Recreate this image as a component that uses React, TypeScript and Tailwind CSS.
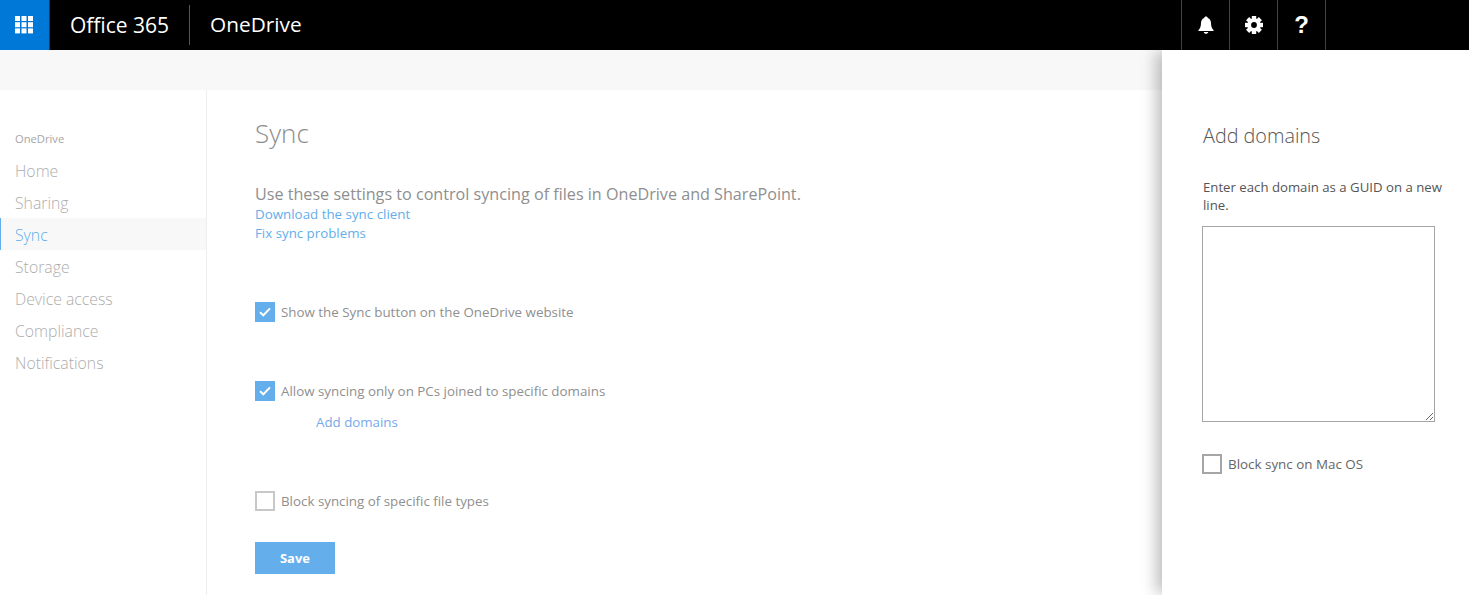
import React from "react";

function Waffle() {
  return (
    <svg width="18" height="18" viewBox="0 0 18 18" fill="#fff">
      {[0, 6.2, 12.4].map((y) =>
        [0, 6.5, 13].map((x) => <rect key={`${x}-${y}`} x={x} y={y} width="5" height="5" />)
      )}
    </svg>
  );
}

function Bell() {
  return (
    <svg width="16" height="18" viewBox="0 0 16 18" fill="#fff">
      <path d="M8 0.5c1 0 1.600.6 1.800 1.400C12 2.700 13 4.600 13 7c0 3 .7 5.200 2.600 7.200v.8H.4v-.8C2.300 12.200 3 10 3 7c0-2.400 1-4.300 3.200-5.100C6.400 1.100 7 .5 8 .5z" />
      <path d="M5.600 16h4.800C10 17.200 9.100 17.800 8 17.800S6 17.200 5.600 16z" />
    </svg>
  );
}

function Gear() {
  return (
    <svg width="18" height="18" viewBox="0 0 18 18">
      <circle cx="9" cy="9" r="4.800" fill="none" stroke="#fff" strokeWidth="3.800" />
      {[0, 45, 90, 135, 180, 225, 270, 315].map((a) => (
        <rect key={a} x="6.800" y="0" width="4.400" height="4" fill="#fff" transform={`rotate(${a} 9 9)`} />
      ))}
    </svg>
  );
}

function Check() {
  return (
    <svg width="12" height="10" viewBox="0 0 12 10" fill="none" stroke="#fff" strokeWidth="2">
      <path d="M1 5.200 4.300 8.300 11 1.400" />
    </svg>
  );
}

function Box({ checked, dark }: { checked?: boolean; dark?: boolean }) {
  if (checked) {
    return (
      <span className="flex h-5 w-5 shrink-0 items-center justify-center bg-[#63aeeb]">
        <Check />
      </span>
    );
  }
  return <span className={`block h-5 w-5 shrink-0 border-2 bg-white ${dark ? "border-[#a6a6a6]" : "border-[#c8c8c8]"}`} />;
}

function Option({ checked, label }: { checked?: boolean; label: string }) {
  return (
    <div className="flex h-5 items-center gap-[6px]">
      <Box checked={checked} />
      <span className="text-[13.35px] leading-5 text-[#8f8f8f]">{label}</span>
    </div>
  );
}

const NAV = ["Home", "Sharing", "Sync", "Storage", "Device access", "Compliance", "Notifications"];

export default function App() {
  return (
    <div className="relative h-[595px] w-full overflow-hidden bg-white font-['Open_Sans','Liberation_Sans',sans-serif]">
      <header className="flex h-[50px] items-center bg-black text-white">
        <div className="flex h-[50px] w-[50px] items-center justify-center border-r border-[#333] bg-[#0078d7] pr-px">
          <Waffle />
        </div>
        <div className="ml-5 text-[21px] leading-[50px]">Office 365</div>
        <div className="ml-5 h-10 w-px bg-[#555]" />
        <div className="ml-5 h-[50px] text-[20.8px] leading-[49px]">OneDrive</div>
        <div className="ml-auto mr-[143px] flex h-full border-l border-[#444]">
          <div className="flex h-full w-12 items-center justify-center border-r border-[#444]"><Bell /></div>
          <div className="flex h-full w-12 items-center justify-center border-r border-[#444]"><Gear /></div>
          <div className="flex h-full w-12 items-center justify-center border-r border-[#444] font-['Liberation_Sans'] text-[24px] font-bold leading-none">?</div>
        </div>
      </header>
      <div className="h-10 bg-[#f8f8f8]" />
      <div className="flex h-[505px]">
        <nav className="w-[207px] shrink-0 border-r border-[#eee] pt-[40px]">
          <div className="mb-[6px] h-[18px] pl-[15px] text-[11.2px] leading-[18px] text-[#a6a6a6]">OneDrive</div>
          {NAV.map((n) => (
            <div
              key={n}
              className={
                n === "Sync"
                  ? "h-8 border-l border-[#63aeeb] bg-[#f8f8f8] pl-[14px] text-[15.8px] font-light leading-[34px] text-[#63aeeb]"
                  : "h-8 pl-[15px] text-[15.8px] font-light leading-[34px] text-[#adadad]"
              }
            >
              {n}
            </div>
          ))}
        </nav>
        <main className="flex-1 pl-[48px] pt-[25px]">
          <h1 className="h-9 text-[26px] font-light leading-9 text-[#8c8c8c]">Sync</h1>
          <p className="mt-[31px] h-[23px] text-[16.15px] leading-[24px] text-[#8f8f8f]">
            Use these settings to control syncing of files in OneDrive and SharePoint.
          </p>
          <a className="block h-[19px] text-[13.35px] leading-[19px] text-[#63aeeb]">Download the sync client</a>
          <a className="block h-[19px] text-[13.3px] leading-[19px] text-[#63aeeb]">Fix sync problems</a>
          <div className="mt-[59px]"><Option checked label="Show the Sync button on the OneDrive website" /></div>
          <div className="mt-[59px]"><Option checked label="Allow syncing only on PCs joined to specific domains" /></div>
          <a className="mt-[11px] block h-5 pl-[61px] text-[13.3px] leading-5 text-[#76a9e8]">Add domains</a>
          <div className="mt-[59px]"><Option label="Block syncing of specific file types" /></div>
          <button className="mt-[31px] block h-8 w-20 bg-[#63aeeb] pt-px text-[13px] font-bold text-white">Save</button>
        </main>
      </div>
      <aside className="absolute bottom-0 right-0 top-[50px] w-[307px] bg-white pl-[41px] pt-[72px] shadow-[-8px_0_14px_-2px_rgba(0,0,0,0.25)]">
        <h2 className="h-7 text-[19.8px] font-light leading-7 text-[#555]">Add domains</h2>
        <p className="mt-[28px] w-[245px] text-[13.2px] leading-[18px] text-[#555]">
          Enter each domain as a GUID on a new line.
        </p>
        <textarea className="-ml-px mt-[12px] block h-[196px] w-[233px] border border-[#a6a6a6] bg-white outline-none" />
        <div className="-ml-px mt-[32px] flex h-5 items-center gap-[6px]">
          <Box dark />
          <span className="text-[13.4px] leading-5 text-[#666]">Block sync on Mac OS</span>
        </div>
      </aside>
    </div>
  );
}
